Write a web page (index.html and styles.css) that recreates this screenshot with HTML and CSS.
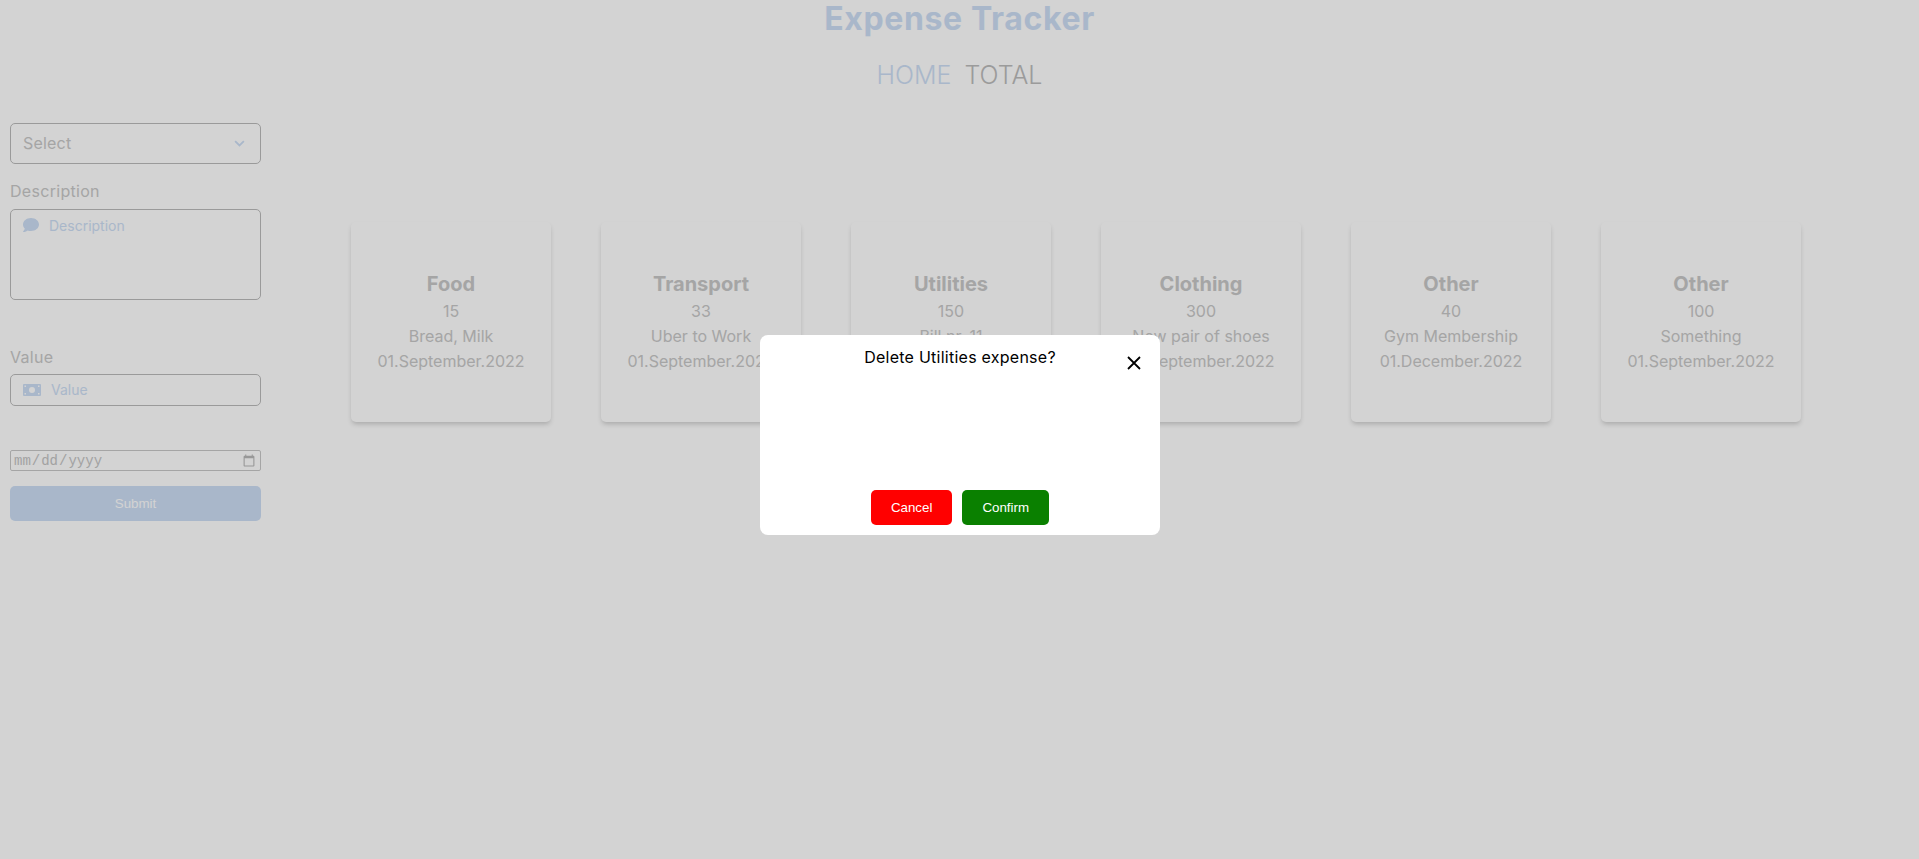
FILE: index.html
```html
<!DOCTYPE html>
<html lang="en">
<head>
<meta charset="utf-8">
<title>Expense Tracker</title>
<link rel="stylesheet" href="styles.css">
</head>
<body>
<header class="header">
  <h1 class="title">Expense Tracker</h1>
  <nav class="nav">
    <a class="nav-link nav-link-active">HOME</a>
    <a class="nav-link">TOTAL</a>
  </nav>
</header>
<main class="main">
  <form class="form">
    <div class="field select-box">
      <span class="select-text">Select</span>
      <svg class="chevron" viewBox="0 0 12 8" width="11" height="7"><path d="M1 1.2 6 6.2 11 1.2" fill="none" stroke="currentColor" stroke-width="2"/></svg>
    </div>
    <div class="label label-desc">Description</div>
    <div class="field area-box">
      <svg class="icon-comment" viewBox="0 0 512 512" width="16" height="16"><path fill="currentColor" d="M256 32C114.600 32 0 125.100 0 240c0 49.600 21.400 95 57 130.700C44.500 421.100 2.700 466 2.200 466.500c-2.200 2.300-2.800 5.700-1.500 8.700S4.800 480 8 480c66.300 0 116-31.800 140.600-51.400 32.700 12.300 69 19.400 107.400 19.400 141.400 0 256-93.100 256-208S397.400 32 256 32z"/></svg>
      <span class="hint">Description</span>
    </div>
    <div class="label label-value">Value</div>
    <div class="field value-box">
      <svg class="icon-money" viewBox="0 0 18 12" width="18" height="12"><path fill="currentColor" fill-rule="evenodd" d="M1 0h16a1 1 0 0 1 1 1v10a1 1 0 0 1-1 1H1a1 1 0 0 1-1-1V1a1 1 0 0 1 1-1zm8 3a3 3 0 1 0 0 6 3 3 0 0 0 0-6zM1.500 1.500v1.500h1.500V1.500zm13.500 0v1.500h1.500V1.500zM1.500 9v1.500h1.500V9zm13.500 0v1.500h1.500V9z"/></svg>
      <span class="hint">Value</span>
    </div>
    <input class="date" type="date">
    <button class="submit" type="button">Submit</button>
  </form>
  <section class="cards">
    <article class="card"><h2 class="card-title">Food</h2><p class="card-line">15</p><p class="card-line">Bread, Milk</p><p class="card-line">01.September.2022</p></article>
    <article class="card"><h2 class="card-title">Transport</h2><p class="card-line">33</p><p class="card-line">Uber to Work</p><p class="card-line">01.September.2022</p></article>
    <article class="card"><h2 class="card-title">Utilities</h2><p class="card-line">150</p><p class="card-line">Bill nr. 11</p><p class="card-line">01.September.2022</p></article>
    <article class="card"><h2 class="card-title">Clothing</h2><p class="card-line">300</p><p class="card-line">New pair of shoes</p><p class="card-line">01.September.2022</p></article>
    <article class="card"><h2 class="card-title">Other</h2><p class="card-line">40</p><p class="card-line">Gym Membership</p><p class="card-line">01.December.2022</p></article>
    <article class="card"><h2 class="card-title">Other</h2><p class="card-line">100</p><p class="card-line">Something</p><p class="card-line">01.September.2022</p></article>
  </section>
</main>
<div class="overlay">
  <div class="modal">
    <p class="modal-title">Delete Utilities expense?</p>
    <svg class="modal-close" viewBox="0 0 14 14" width="14" height="14"><path d="M1 1 13 13M13 1 1 13" fill="none" stroke="#000" stroke-width="1.800"/></svg>
    <div class="modal-actions">
      <button class="btn btn-cancel" type="button">Cancel</button>
      <button class="btn btn-confirm" type="button">Confirm</button>
    </div>
  </div>
</div>
</body>
</html>
```
FILE: styles.css
```css
* { box-sizing: border-box; }
html, body { margin: 0; height: 100%; }
body {
  background: #fff;
  color: #c8c8c8;
  font-family: "Inter", "Noto Sans", sans-serif;
  font-size: 16px;
  overflow: hidden;
}
.header { text-align: center; }
.title {
  margin: 0;
  height: 38px;
  line-height: 38px;
  font-size: 32px;
  font-weight: 700;
  color: #cddef5;
  letter-spacing: 0.63px;
}
.nav {
  display: flex;
  justify-content: center;
  gap: 13px;
  margin-top: 19px;
  height: 35px;
  line-height: 37px;
  font-size: 25px;
  font-weight: 300;
}
.nav-link { color: #bcbcbc; }
.nav-link-active { color: #cddef5; }
.main {
  display: flex;
  padding: 31px 0 0 10px;
}
.form {
  width: 251px;
  flex: none;
  display: flex;
  flex-direction: column;
}
.field {
  border: 1px solid #bbb;
  border-radius: 5px;
  display: flex;
  color: #cddef5;
}
.select-box {
  height: 41px;
  align-items: center;
  justify-content: space-between;
  padding: 0 15px 0 12px;
}
.select-text { color: #c8c8c8; letter-spacing: 0.2px; line-height: 37px; height: 38px; }
.label { line-height: 24px; color: #c8c8c8; letter-spacing: 0.3px; }
.label-desc { margin-top: 15px; }
.area-box {
  margin-top: 6px;
  height: 91px;
  padding: 6px 12px;
  gap: 10px;
}
.label-value { margin-top: 45px; }
.value-box {
  margin-top: 5px;
  height: 32px;
  align-items: center;
  padding: 0 12px;
  gap: 10px;
}
.hint { font-size: 14px; line-height: 20px; }
.icon-comment { margin-top: 1px; }
.date {
  margin: 44px 0 0;
  width: 251px;
  height: 21px;
  padding: 1px 2px;
  border: 1px solid #c8c8c8;
  border-radius: 2px;
  background: transparent;
  color: #c4c4c4;
  font-family: "Liberation Mono", monospace;
  font-size: 14px;
}
.date::-webkit-calendar-picker-indicator { opacity: 0.28; }
.submit {
  margin-top: 15px;
  height: 35px;
  border: 0;
  border-radius: 5px;
  background: #cddef5;
  color: #fff;
  font-family: "Liberation Sans", Arial, sans-serif;
  font-size: 13.33px;
}
.cards {
  display: flex;
  gap: 50px;
  margin: 99px 0 0 90px;
}
.card {
  width: 200px;
  height: 200px;
  border-radius: 5px;
  box-shadow: 0 3px 5px -1px rgba(0, 0, 0, 0.2);
  text-align: center;
  padding-top: 48px;
}
.card-title {
  margin: 0 0 1px;
  font-size: 20px;
  line-height: 28px;
  font-weight: 700;
}
.card-line { margin: 0; line-height: 25px; }
.overlay {
  position: fixed;
  inset: 0;
  background: rgba(0, 0, 0, 0.173);
}
.modal {
  position: absolute;
  left: 760px;
  top: 335px;
  width: 400px;
  height: 200px;
  background: #fff;
  border-radius: 8px;
  padding: 8px 10px 10px;
  display: flex;
  flex-direction: column;
  align-items: center;
  justify-content: space-between;
}
.modal-title {
  margin: 0;
  color: #000;
  line-height: 28px;
  letter-spacing: 0.25px;
}
.modal-close {
  position: absolute;
  top: 21px;
  left: 367px;
}
.modal-actions {
  display: flex;
  gap: 10px;
}
.btn {
  height: 35px;
  padding: 0 20px;
  border: 0;
  border-radius: 5px;
  color: #fff;
  font-family: "Liberation Sans", Arial, sans-serif;
  font-size: 13.33px;
}
.btn-cancel { background: #f00; }
.btn-confirm { background: #0a8000; }
```
